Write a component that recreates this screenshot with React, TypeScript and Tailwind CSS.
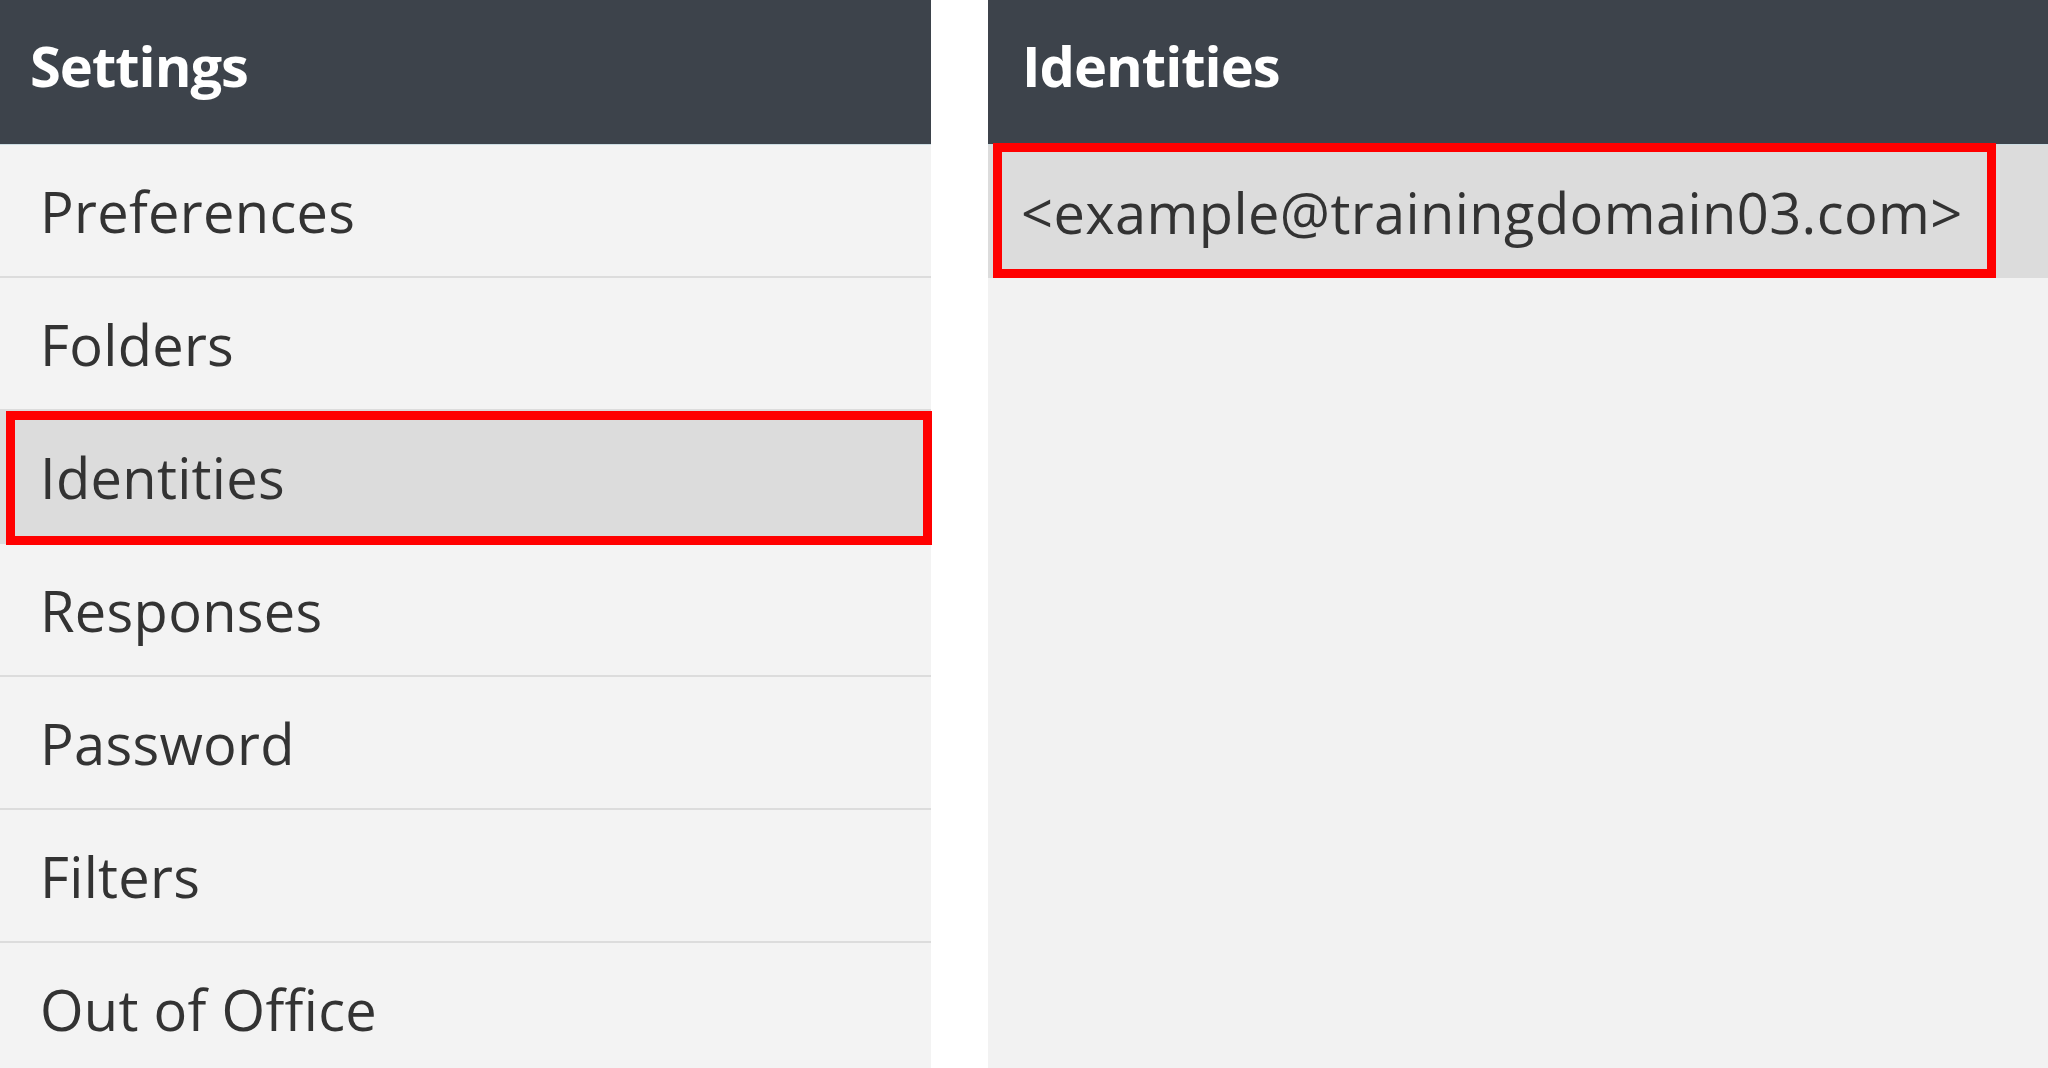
const menu = [
  "Preferences",
  "Folders",
  "Identities",
  "Responses",
  "Password",
  "Filters",
  "Out of Office",
];

const Settings = () => {
  return (
    <aside className="flex w-[931px] shrink-0 flex-col bg-[#f3f3f3]">
      <div className="flex h-[145px] shrink-0 items-start border-b border-[#cddde3] bg-[#3d434b] pl-[30px] pt-[23px]">
        <h1 className="text-[56px] font-bold leading-[84px] tracking-[-1px] text-white">
          Settings
        </h1>
      </div>
      {menu.map((item) => (
        <div
          key={item}
          className={
            item === "Identities"
              ? "relative flex h-[133px] shrink-0 items-center border-b-2 border-[#dcdcdc] bg-[#dcdcdc] pl-[40px]"
              : "relative flex h-[133px] shrink-0 items-center border-b-2 border-[#dcdcdc] pl-[40px]"
          }
        >
          <span className="text-[56px] leading-none tracking-[0.3px] text-[#333]">
            {item}
          </span>
          {item === "Identities" && (
            <div className="absolute -right-px -bottom-[3px] left-[6px] top-0 border-[9px] border-[#ff0000]" />
          )}
        </div>
      ))}
    </aside>
  );
};

const Identities = () => {
  return (
    <main className="flex flex-1 flex-col bg-[#f2f2f2]">
      <div className="flex h-[145px] shrink-0 items-start border-b border-[#cddde3] bg-[#3d434b] pl-[34px] pt-[23px]">
        <h2 className="text-[56px] font-bold leading-[84px] tracking-[-1px] text-white">
          Identities
        </h2>
      </div>
      <div className="relative flex h-[133px] shrink-0 items-center bg-[#dcdcdc] pl-[33px]">
        <span className="text-[56px] leading-none tracking-[0.4px] text-[#333]">
          &lt;example@trainingdomain03.com&gt;
        </span>
        <div className="absolute -top-[2px] bottom-0 left-[5px] w-[1003px] border-[9px] border-[#ff0000]" />
      </div>
    </main>
  );
};

const App = () => {
  return (
    <div className="flex h-[1068px] w-[2048px] gap-[57px] overflow-hidden bg-white font-['Open_Sans',sans-serif]">
      <Settings />
      <Identities />
    </div>
  );
};

export default App;
